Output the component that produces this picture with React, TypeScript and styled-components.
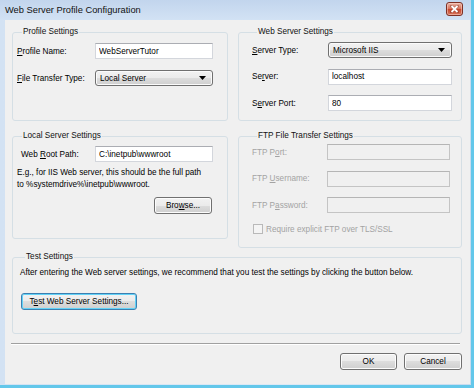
import styled, { createGlobalStyle } from "styled-components";

const GlobalStyle = createGlobalStyle`
  html, body {
    margin: 0;
    padding: 0;
    background: #fff;
  }
  * {
    box-sizing: border-box;
  }
`;

const Window = styled.div`
  width: 474px;
  height: 388px;
  display: flex;
  flex-direction: column;
  background: #d3e2f3;
  border-right: 3px solid #63c7ea;
  border-bottom: 3px solid #63c7ea;
  font-family: "Liberation Sans", Arial, sans-serif;
  font-size: 8.2px;
  color: #000;
`;

const TitleBar = styled.div`
  height: 20px;
  flex: none;
  display: flex;
  align-items: flex-start;
  justify-content: space-between;
  padding: 0 8px 0 5px;
  background: linear-gradient(180deg, #c2d5ed 0%, #d2e2f4 100%);
`;

const Title = styled.span`
  font-size: 9.3px;
  line-height: 20px;
  color: #111;
`;

const CloseButton = styled.div`
  width: 17px;
  height: 14px;
  margin-top: 2px;
  display: flex;
  align-items: center;
  justify-content: center;
  border: 1px solid #7d3025;
  border-radius: 3px;
  background: linear-gradient(180deg, #eab3a5 0%, #d8725b 48%, #c6452c 52%, #d8775e 100%);
  box-shadow: inset 0 0 0 1px rgba(255, 220, 210, 0.5);
`;

const Frame = styled.div`
  flex: 1;
  display: flex;
  padding: 0 1px 1px 5px;
  background: linear-gradient(90deg, #d3e2f3 0%, #dde9f6 60%, #c9dbef 100%);
`;

const Client = styled.div`
  flex: 1;
  display: flex;
  flex-direction: column;
  padding: 7px 8px 0 7px;
  background: #f0f0f0;
`;

const Groups = styled.div`
  display: grid;
  grid-template-columns: 216px 224px;
  column-gap: 10px;
  row-gap: 10px;
  align-items: start;
`;

const GroupBox = styled.fieldset<{ $h: number; $pad: string }>`
  margin: 0;
  min-width: 0;
  height: ${(p) => p.$h}px;
  padding: ${(p) => p.$pad};
  border: 1px solid #d5dfe5;
  border-radius: 3px;
`;

const Legend = styled.legend`
  margin-left: 5px;
  padding: 0 1px;
  line-height: 10px;
  color: #111;
`;

const Fields = styled.div<{ $label: number; $input: number; $gap: number }>`
  display: grid;
  grid-template-columns: ${(p) => p.$label}px ${(p) => p.$input}px;
  row-gap: ${(p) => p.$gap}px;
  align-items: center;
`;

const Label = styled.span<{ $disabled?: boolean; $indent?: number }>`
  color: ${(p) => (p.$disabled ? "#a3a3a3" : "#000")};
  padding-left: ${(p) => p.$indent ?? 0}px;
  white-space: nowrap;
`;

const TextBox = styled.input<{ $disabled?: boolean }>`
  height: 16px;
  width: 100%;
  margin: 0;
  padding: 0 3px;
  font-family: "Liberation Sans", Arial, sans-serif;
  font-size: 8.2px;
  color: #000;
  outline: none;
  background: ${(p) => (p.$disabled ? "#f0f0f0" : "#fff")};
  border: 1px solid ${(p) => (p.$disabled ? "#c4c4c4" : "#d3d6dc")};
  border-top-color: ${(p) => (p.$disabled ? "#b5b5b5" : "#abadb3")};
`;

const Combo = styled.div`
  height: 16px;
  display: flex;
  align-items: center;
  justify-content: space-between;
  padding: 0 6px 0 4px;
  border: 1px solid #707070;
  border-radius: 3px;
  background: linear-gradient(180deg, #f2f2f2 0%, #ebebeb 50%, #dddddd 50%, #cfcfcf 100%);
  box-shadow: inset 0 0 0 1px #fbfbfb;
`;

const Button = styled.button<{ $w: number; $default?: boolean }>`
  width: ${(p) => p.$w}px;
  height: 17px;
  padding: 0;
  font-family: "Liberation Sans", Arial, sans-serif;
  font-size: 8.2px;
  color: #000;
  border: 1px solid ${(p) => (p.$default ? "#3c7fb1" : "#707070")};
  border-radius: 3px;
  background: linear-gradient(180deg, #f2f2f2 0%, #ebebeb 50%, #dddddd 50%, #cfcfcf 100%);
  box-shadow: inset 0 0 0 1px ${(p) => (p.$default ? "#62d2f7" : "#fcfcfc")};
`;

const Note = styled.p<{ $top: number }>`
  margin: ${(p) => p.$top}px 0 0;
  line-height: 12px;
  white-space: nowrap;
`;

const RightAlign = styled.div`
  display: flex;
  justify-content: flex-end;
  margin-top: 6px;
`;

const CheckRow = styled.div`
  display: flex;
  align-items: center;
  gap: 3px;
  margin: 11px 0 0 1px;
  color: #a3a3a3;
`;

const CheckBox = styled.span`
  width: 10px;
  height: 10px;
  border: 1px solid #b9b9b9;
  background: #f4f4f4;
`;

const TestBox = styled(GroupBox)`
  margin-top: 4px;
  width: 450px;
`;

const TestButtonWrap = styled.div`
  margin: 14px 0 0 1px;
`;

const Separator = styled.div`
  margin: 9px 2px 0 -1px;
  border-top: 1px solid #a0a0a0;
  border-bottom: 1px solid #fff;
`;

const ButtonRow = styled.div`
  display: flex;
  justify-content: flex-end;
  gap: 7px;
  margin-top: 8px;
`;

const Arrow = () => (
  <svg width="7" height="4" viewBox="0 0 7 4">
    <path d="M0 0h7L3.5 4z" fill="#000" />
  </svg>
);

const CloseIcon = () => (
  <svg width="9" height="8" viewBox="0 0 9 8">
    <path d="M1.5 1l6 6M7.5 1l-6 6" stroke="#5a1a12" strokeWidth="3" strokeLinecap="square" opacity="0.35" />
    <path d="M1.5 1l6 6M7.5 1l-6 6" stroke="#fff" strokeWidth="1.8" />
  </svg>
);

const App = () => {
  return (
    <>
      <GlobalStyle />
      <Window>
        <TitleBar>
          <Title>Web Server Profile Configuration</Title>
          <CloseButton>
            <CloseIcon />
          </CloseButton>
        </TitleBar>
        <Frame>
          <Client>
            <Groups>
              <GroupBox $h={94} $pad="6px 0 0 4px">
                <Legend>Profile Settings</Legend>
                <Fields $label={78} $input={118} $gap={11}>
                  <Label>
                    <u>P</u>rofile Name:
                  </Label>
                  <TextBox defaultValue="WebServerTutor" />
                  <Label>
                    <u>F</u>ile Transfer Type:
                  </Label>
                  <Combo>
                    <span>Local Server</span>
                    <Arrow />
                  </Combo>
                </Fields>
              </GroupBox>

              <GroupBox $h={94} $pad="5px 0 0 13px">
                <Legend>Web Server Settings</Legend>
                <Fields $label={76} $input={124} $gap={10.5}>
                  <Label>
                    <u>S</u>erver Type:
                  </Label>
                  <Combo>
                    <span>Microsoft IIS</span>
                    <Arrow />
                  </Combo>
                  <Label>
                    Se<u>r</u>ver:
                  </Label>
                  <TextBox defaultValue="localhost" />
                  <Label>
                    S<u>e</u>rver Port:
                  </Label>
                  <TextBox defaultValue="80" />
                </Fields>
              </GroupBox>

              <GroupBox $h={108} $pad="5px 15px 0 4px">
                <Legend>Local Server Settings</Legend>
                <Fields $label={78} $input={118} $gap={0}>
                  <Label $indent={4}>
                    Web <u>R</u>oot Path:
                  </Label>
                  <TextBox defaultValue="C:\inetpub\wwwroot" />
                </Fields>
                <Note $top={5}>
                  E.g., for IIS Web server, this should be the full path
                  <br />
                  to %systemdrive%\inetpub\wwwroot.
                </Note>
                <RightAlign>
                  <Button $w={58}>
                    Bro<u>w</u>se...
                  </Button>
                </RightAlign>
              </GroupBox>

              <GroupBox $h={117} $pad="3px 0 0 13px">
                <Legend>FTP File Transfer Settings</Legend>
                <Fields $label={75} $input={123} $gap={10.5}>
                  <Label $disabled>
                    FTP P<u>o</u>rt:
                  </Label>
                  <TextBox $disabled disabled />
                  <Label $disabled>
                    FTP <u>U</u>sername:
                  </Label>
                  <TextBox $disabled disabled />
                  <Label $disabled>
                    FTP P<u>a</u>ssword:
                  </Label>
                  <TextBox $disabled disabled />
                </Fields>
                <CheckRow>
                  <CheckBox />
                  <span>Require explicit FTP over TLS/SSL</span>
                </CheckRow>
              </GroupBox>
            </Groups>

            <TestBox $h={82} $pad="5px 0 0 7px">
              <Legend>Test Settings</Legend>
              <Note $top={0}>
                After entering the Web server settings, we recommend that you test the settings by clicking the button below.
              </Note>
              <TestButtonWrap>
                <Button $w={116} $default>
                  T<u>e</u>st Web Server Settings...
                </Button>
              </TestButtonWrap>
            </TestBox>

            <Separator />
            <ButtonRow>
              <Button $w={57}>OK</Button>
              <Button $w={58}>Cancel</Button>
            </ButtonRow>
          </Client>
        </Frame>
      </Window>
    </>
  );
};

export default App;
